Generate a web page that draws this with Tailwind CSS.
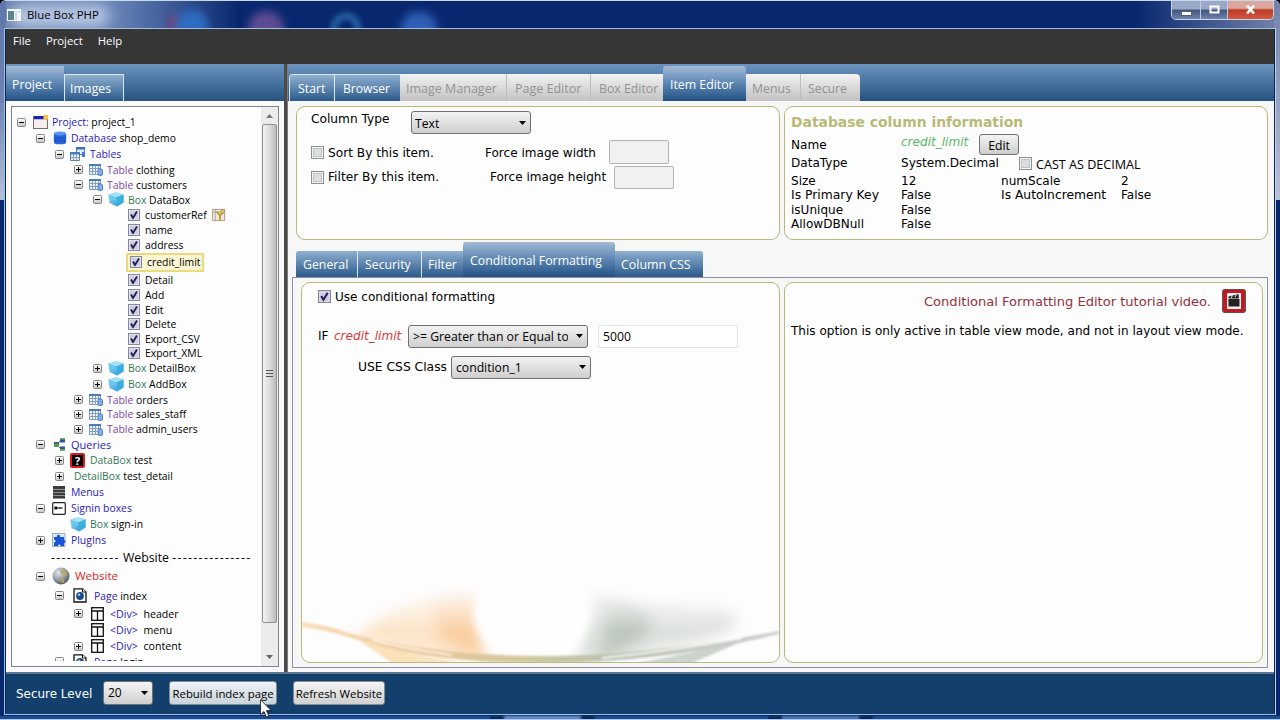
<!DOCTYPE html>
<html lang="en">
<head>
    <meta charset="UTF-8">
    <meta name="viewport" content="width=device-width, initial-scale=1.0">
    <title>Blue Box PHP</title>
    <script src="https://cdn.jsdelivr.net/npm/@tailwindcss/browser@4"></script>
</head>
<body class="w-[1280px] h-[720px] overflow-hidden bg-[#03060f] text-black">

    <!-- Icon sprites -->
    <svg class="absolute w-0 h-0">
        <defs>
            <linearGradient id="g-cube" x1="0" y1="0" x2="1" y2="1"><stop offset="0" stop-color="#9be0f8"/><stop offset="1" stop-color="#1f8fd0"/></linearGradient>
            <linearGradient id="g-btn" x1="0" y1="0" x2="0" y2="1"><stop offset="0" stop-color="#fff"/><stop offset="1" stop-color="#c4c4c4"/></linearGradient>
            <radialGradient id="g-globe" cx=".35" cy=".3" r=".8"><stop offset="0" stop-color="#e2e6ee"/><stop offset=".5" stop-color="#98a0ae"/><stop offset="1" stop-color="#454a55"/></radialGradient>
        </defs>
        <symbol id="i-minus" viewBox="0 0 9 9"><rect x=".5" y=".5" width="8" height="8" rx="1" fill="url(#g-btn)" stroke="#858585"/><path d="M2 4.500h5" stroke="#000"/></symbol>
        <symbol id="i-plus" viewBox="0 0 9 9"><rect x=".5" y=".5" width="8" height="8" rx="1" fill="url(#g-btn)" stroke="#858585"/><path d="M2 4.500h5M4.500 2v5" stroke="#000"/></symbol>
        <symbol id="i-project" viewBox="0 0 16 16"><rect x=".5" y="2.500" width="14" height="12" fill="#f4eeee" stroke="#7d6c6c"/><path d="M1 2h10v3H1z" fill="#1a1fc4"/><path d="M10.500 1h4.500v4.500h-4.500z" fill="#ffc62a"/><path d="M1 5.500h13" stroke="#c9bcbc"/></symbol>
        <symbol id="i-db" viewBox="0 0 16 16"><path d="M1 2.500v10.500c0 3 14 3 14 0V2.500z" fill="#2a62dc"/><ellipse cx="8" cy="2.800" rx="7" ry="2.200" fill="#5d97f5"/><path d="M1 6.500c1 2.200 13 2.200 14 0M1 10c1 2.200 13 2.200 14 0" fill="none" stroke="#164bb5"/></symbol>
        <symbol id="i-tables" viewBox="0 0 16 16"><path d="M6.500 1.500h8v7h-8z" fill="#e3edf7" stroke="#5a7da8"/><path d="M6 1h9v2.500H6z" fill="#3e6fb0"/><path d="M.5 6.500h9v8h-9z" fill="#e8f0f8" stroke="#5a7da8"/><path d="M0 6h10v2.500H0z" fill="#4a7cba"/><path d="M3.500 8v6.500M6.500 8v6.500M1 11.500h8" stroke="#8aa5c4"/><path d="M12 6h3v5h-3z" fill="#3f7bd0"/></symbol>
        <symbol id="i-table" viewBox="0 0 14 13"><path d="M.5 1.500h11v10H.5z" fill="#eef3f9" stroke="#7d9cc2"/><path d="M0 1h12v2H0z" fill="#4c7cb6"/><path d="M3.500 3v8M6.500 3v8M9.500 3v8M1 5.500h11M1 8.500h11" stroke="#7d97b8" stroke-width=".9"/><rect x="9" y="6" width="4.500" height="6.500" rx="1.500" fill="#7fb0ea" stroke="#3b6db3" stroke-width=".8"/></symbol>
        <symbol id="i-cube" viewBox="0 0 16 15"><path d="M.5 2.500L8 .3 15.500 2.500v8L9 14.500 1.500 11z" fill="url(#g-cube)"/><path d="M.5 2.500L8 .3 15.500 2.500 8 5.500z" fill="#a3e2f8"/><path d="M8 5.500L15.500 2.500v8L9 14.500z" fill="#3aaee0" opacity=".8"/><path d="M.5 2.500l7.500 3 .5 3.500-7.500-2z" fill="#6cc8ee"/></symbol>
        <symbol id="i-check" viewBox="0 0 12 12"><rect x=".5" y=".5" width="11" height="11" fill="#e4e2ee" stroke="#86869a"/><rect x="2" y="2" width="8" height="8" fill="#cfcde0"/><path d="M3 5.500l2 3.500L9 2.500" fill="none" stroke="#24205c" stroke-width="1.900"/></symbol>
        <symbol id="i-box" viewBox="0 0 13 13"><rect x=".5" y=".5" width="12" height="12" fill="#f4f4f4" stroke="#8e8f8f"/><rect x="2.500" y="2.500" width="8" height="8" fill="#dcdee0" stroke="#bfc3c8"/></symbol>
        <symbol id="i-key" viewBox="0 0 15 15"><path d="M.5 1.500h13v12H.5z" fill="#eee9da" stroke="#a29c8c"/><path d="M.5 4.500h13M3.500 1v13" stroke="#a7a294"/><path d="M8.500 13.500V8L5 3.500M8.500 8l4-4" fill="none" stroke="#c3a03c" stroke-width="2.200"/><circle cx="11.500" cy="3.500" r="2" fill="#e7ca63" stroke="#9d8132" stroke-width=".7"/></symbol>
        <symbol id="i-queries" viewBox="0 0 13 15"><path d="M4 7l4-4M4 8l4 4" stroke="#777"/><path d="M1 5h5v5H1z" fill="#4f9a3e"/><path d="M7 1h5v4.500H7zM7 9.500h5V14H7z" fill="#2f55a0"/><path d="M7 1h5v1.500H7zM7 12h5v2H7z" fill="#6fae58"/><path d="M1 5h5v1.500H1z" fill="#35589c"/></symbol>
        <symbol id="i-menus" viewBox="0 0 12 13"><path d="M0 0h12v13H0z" fill="#3b3b3b"/><path d="M0 3.500h12M0 6.500h12M0 9.500h12M0 12.500h12" stroke="#909090"/></symbol>
        <symbol id="i-signin" viewBox="0 0 14 13"><rect x=".7" y=".7" width="12.600" height="11.600" rx="1" fill="#fff" stroke="#222" stroke-width="1.200"/><path d="M2.500 6h8" stroke="#111" stroke-width="1.300"/><path d="M2.500 4.500h2.500v3H2.500z" fill="#111"/></symbol>
        <symbol id="i-plug" viewBox="0 0 14 14"><path d="M.5.5h12.500v13H.5z" fill="#dfe8f6" stroke="#9aa8bd"/><path d="M2 4h3c-1-3 4-3 3 0h4v3c2 0 2 3 0 3v3H8.500c.5-2-3-2-2.500 0H2V9.500c2 0 2-3 0-3z" fill="#1653d6"/></symbol>
        <symbol id="i-globe" viewBox="0 0 18 18"><circle cx="9" cy="9" r="8.500" fill="url(#g-globe)"/><path d="M8 3c3-1 6 0 7 3s-1 4-3 3-4-3-4-6zM8 10c3 0 5 2 4 6-3 0-4-3-4-6z" fill="#b9a95e" opacity=".8"/></symbol>
        <symbol id="i-page" viewBox="0 0 14 15"><path d="M1 .8h8.500L13 4v10H1z" fill="#fff" stroke="#111" stroke-width="1.300"/><path d="M9.500.8V4H13" fill="#fff" stroke="#111"/><circle cx="7" cy="8" r="3.900" fill="#1d4b86"/><circle cx="6" cy="6.800" r="1.300" fill="#9cc7ee"/></symbol>
        <symbol id="i-div" viewBox="0 0 13 14"><rect x=".7" y=".7" width="11.600" height="12.600" fill="#fff" stroke="#111" stroke-width="1.300"/><path d="M1 4h11M6.500 4v9.500" stroke="#111" stroke-width="1.300"/></symbol>
    </svg>

    <div class="relative w-[1280px] h-[720px] overflow-hidden flex flex-col rounded-t-md border-t border-[#c8d8ee] bg-[#08276f] font-['Open_Sans','Noto_Sans',sans-serif]">

        <!-- Glass reflections of the desktop behind the frame -->
        <div class="absolute inset-0 overflow-hidden">
            <div class="absolute left-0 top-0 w-[240px] h-7 bg-linear-to-r from-[#6b7fae] via-[#6480b4] to-transparent"></div>
            <div class="absolute left-[10px] top-[3px] w-[100px] h-[24px] rounded-full bg-[#b4c6e2] blur-[7px]"></div>
            <div class="absolute left-0 top-0 w-1.5 h-[199px] bg-linear-to-b from-[#5e76a8] via-[#6e84b4] to-[#b4c0da]"></div>
            <div class="absolute right-0 top-0 w-[145px] h-7 bg-linear-to-r from-transparent to-[#7583ac]"></div>
            <div class="absolute right-0 top-0 w-1.5 h-[199px] bg-linear-to-b from-[#7482aa] to-[#b9c2d8]"></div>
            <div class="absolute left-[166px] top-[14px] w-4 h-4 rounded-full bg-[#6a4a80] blur-[3px]"></div>
            <div class="absolute left-[176px] top-[9px] w-8 h-8 rounded-full bg-[#2e6cc2] blur-[4px]"></div>
            <div class="absolute left-[248px] top-[10px] w-9 h-9 rounded-full bg-[#5d4c94] blur-[4px]"></div>
            <div class="absolute left-[332px] top-[13px] w-7 h-7 rounded-full border-4 border-[#3b86c2] blur-[3px]"></div>
            <div class="absolute left-[401px] top-[11px] w-9 h-8 rounded-full bg-[#2f5fb5] blur-[4px]"></div>
            <div class="absolute left-0 bottom-0 w-full h-1 bg-[#1c4a93]"></div>
            <div class="absolute left-[490px] bottom-0 w-[105px] h-1 bg-[#6a8cbf] border-x-[14px] border-[#0b2550] blur-[1px]"></div>
            <div class="absolute left-[768px] bottom-0 w-[105px] h-1 bg-[#4d74b0] border-x-[14px] border-[#0b2550] blur-[1px]"></div>
            <div class="absolute left-0 bottom-0 w-full h-px bg-[#a9cdf0]"></div>
        </div>

        <!-- Title bar -->
        <header class="relative h-[27px] shrink-0 flex items-start justify-between pl-[7px] pr-[6px]">
            <div class="flex items-center h-7">
                <svg class="w-[14px] h-[12px] mr-[6px]" viewBox="0 0 14 12"><path d="M0 0h14v12H0z" fill="#f3f6fa"/><path d="M1 2h6v9H1z" fill="#5a8590"/><path d="M8 2h2v9H8zM11 2h2v2h-2z" fill="#cddbe2"/></svg>
                <span class="text-[11.4px]">Blue Box PHP</span>
            </div>
            <div class="flex h-[19px] w-[103px] rounded-b-[5px] border border-t-0 border-[#c9d3e4] overflow-hidden">
                <div class="w-[29px] flex justify-center pt-[10px] border-r border-[#c0cbde] bg-linear-to-b from-[#9aa9c8] from-45% via-[#41557f] via-50% to-[#6f84ac]"><span class="w-[11px] h-[5px] bg-white border border-[#555e78]"></span></div>
                <div class="w-[27px] flex justify-center pt-[4px] border-r border-[#c0cbde] bg-linear-to-b from-[#9aa9c8] from-45% via-[#41557f] via-50% to-[#6f84ac]"><svg class="w-[11px] h-[9px]" viewBox="0 0 11 9"><path d="M1.500 1.500h8v6h-8z" fill="none" stroke="#fff" stroke-width="2"/></svg></div>
                <div class="flex-1 flex justify-center pt-[4px] bg-linear-to-b from-[#dba69b] from-40% via-[#bb3a28] via-50% to-[#d4583e]"><svg class="w-[11px] h-[9px]" viewBox="0 0 11 9"><path d="M2 .5l7 8M9 .5l-7 8" stroke="#fff" stroke-width="2.600"/></svg></div>
            </div>
        </header>

        <!-- Window client area -->
        <div class="relative mx-[4px] h-[687px] shrink-0 flex flex-col border border-[#9fc0e6] border-r-[#c4d4ea]">
            <div class="flex flex-col flex-1 border-x border-[#0b2348]">
                <nav class="h-[35px] shrink-0 flex items-start gap-[15px] pl-[7px] pt-[4px] bg-[#363636] text-white text-[11.3px] leading-4">
                    <span>File</span><span>Project</span><span>Help</span>
                </nav>

                <div class="flex h-[608px] shrink-0">
                    <!-- Project explorer -->
                    <aside class="w-[278px] shrink-0 flex flex-col bg-[#fafafa]">
                        <div class="h-[37px] shrink-0 flex items-end bg-linear-to-b from-[#6b95c0] to-[#265380] text-white text-[12.3px]">
                            <div class="w-[58px] h-[35px] pl-[6px] pt-[11px] leading-4 bg-linear-to-b from-[#a3bad5] via-[#5c86b3] to-[#215284]">Project</div>
                            <div class="w-[60px] h-[27px] pl-[5px] pt-[6px] leading-4 border border-b-0 border-[#dbe7f3] bg-linear-to-b from-[#8fb0d0] to-[#2a5a8c]">Images</div>
                        </div>
                        <div class="ml-[5px] mt-[5px] w-[268px] h-[561px] flex border border-[#80848c] bg-[#fdfdfd]">
                            <div id="tree" class="flex-1 h-[554px] pt-[7px] overflow-hidden text-[10.4px] whitespace-nowrap"></div>
                            <div class="w-[17px] h-full flex flex-col items-center bg-[#ececec]">
                                <div class="h-[17px] shrink-0 flex items-center"><svg class="w-[7px] h-1" viewBox="0 0 7 4"><path d="M0 4l3.500-4L7 4z" fill="#777"/></svg></div>
                                <div class="w-[15px] h-[499px] shrink-0 flex flex-col items-center justify-center border border-[#909090] rounded-[2px] bg-linear-to-r from-[#f3f3f3] via-[#dcdcdc] to-[#bdbdbd]">
                                    <div class="w-[7px] h-[7px] border-y border-[#555] flex items-center"><div class="w-full h-px bg-[#555]"></div></div>
                                </div>
                                <div class="flex-1 flex items-end pb-[7px]"><svg class="w-[7px] h-1" viewBox="0 0 7 4"><path d="M0 0l3.500 4L7 0z" fill="#666"/></svg></div>
                            </div>
                        </div>
                    </aside>

                    <div class="w-[4px] shrink-0 bg-[#4b4b4b] border-r border-[#7c7c7c]"></div>

                    <!-- Editor -->
                    <main class="flex-1 flex flex-col bg-[#f7f7f7]">
                        <div class="h-[37px] shrink-0 flex items-end pl-[1px] bg-linear-to-b from-[#6b95c0] to-[#265380] text-[12.3px] leading-4 whitespace-nowrap text-[#929292]">
                            <div class="w-[46px] h-[27px] pl-[8px] pt-[6px] border border-b-0 rounded-tl border-[#dbe7f3] bg-linear-to-b from-[#8fb0d0] to-[#2a5a8c] text-white">Start</div>
                            <div class="w-[65px] h-[27px] pl-[8px] pt-[6px] border-t border-[#dbe7f3] bg-linear-to-b from-[#8fb0d0] to-[#2a5a8c] text-white text-[12.1px]">Browser</div>
                            <div class="w-[107px] h-[27px] pl-[6px] pt-[7px] border-r border-[#bdbdbd] bg-linear-to-b from-[#f2f2f2] to-[#c2c2c2] text-[12.5px]">Image Manager</div>
                            <div class="w-[84px] h-[27px] pl-[8px] pt-[7px] border-r border-[#bdbdbd] bg-linear-to-b from-[#f2f2f2] to-[#c2c2c2] text-[12.5px]">Page Editor</div>
                            <div class="w-[72px] h-[27px] pl-[8px] pt-[7px] bg-linear-to-b from-[#f2f2f2] to-[#c2c2c2]">Box Editor</div>
                            <div class="w-[83px] h-[35px] pl-[7px] pt-[11px] rounded-t-[3px] bg-linear-to-b from-[#a3bad5] via-[#5c86b3] to-[#215284] text-white">Item Editor</div>
                            <div class="w-[55px] h-[27px] pl-[6px] pt-[7px] border-r border-[#bdbdbd] bg-linear-to-b from-[#f2f2f2] to-[#c2c2c2]">Menus</div>
                            <div class="w-[59px] h-[27px] pl-[7px] pt-[7px] rounded-tr bg-linear-to-b from-[#f2f2f2] to-[#c2c2c2]">Secure</div>
                        </div>

                        <!-- Column settings -->
                        <div class="flex gap-[4px] pl-[8px] pt-[5px] font-['DejaVu_Sans',sans-serif] text-[12.05px] leading-[15px] whitespace-nowrap">
                            <section class="w-[484px] h-[134px] rounded-[9px] border border-[#b9b97c] bg-[#fdfdfd] pl-[14px]">
                                <div class="flex h-[33px]">
                                    <span class="w-[100px] pt-[5px] text-[12.2px]">Column Type</span>
                                    <div class="w-[120px] h-[23px] mt-[4px] flex items-center justify-between pl-[3px] pr-[4px] rounded-[3px] border border-[#707070] bg-linear-to-b from-[#f2f2f2] to-[#cfcfcf] font-['Open_Sans',sans-serif] text-[12.2px]"><span class="pt-px">Text</span><svg class="w-[7px] h-1" viewBox="0 0 7 4"><path d="M0 0h7L3.500 4z"/></svg></div>
                                </div>
                                <div class="flex items-center h-[24px]">
                                    <svg class="w-[13px] h-[13px] mr-[4px]"><use href="#i-box"/></svg>
                                    <span class="w-[157px] pt-[2px] text-[12.2px]">Sort By this item.</span>
                                    <span class="w-[124px] pt-[2px]">Force image width</span>
                                    <div class="w-[60px] h-[24px] rounded-[2px] border border-[#b4b4b4] bg-[#f1f1f1]"></div>
                                </div>
                                <div class="flex items-center h-[27px]">
                                    <svg class="w-[13px] h-[13px] mr-[4px]"><use href="#i-box"/></svg>
                                    <span class="w-[162px] text-[12.2px]">Filter By this item.</span>
                                    <span class="w-[124px]">Force image height</span>
                                    <div class="w-[60px] h-[23px] rounded-[2px] border border-[#b4b4b4] bg-[#f1f1f1]"></div>
                                </div>
                            </section>
                            <section class="w-[484px] h-[134px] rounded-[9px] border border-[#b9b97c] bg-[#fdfdfd] pl-[6px] pt-[7px]">
                                <h2 class="h-[18px] text-[13.9px] leading-4 font-bold text-[#b9b978]">Database column information</h2>
                                <div class="flex h-[24px]">
                                    <span class="w-[110px] pt-[6px]">Name</span>
                                    <span class="w-[78px] pt-[3px] italic text-[#55b865]">credit_limit</span>
                                    <div class="w-[40px] h-[21px] mt-[2px] flex items-center justify-center pt-px rounded-[3px] border border-[#707070] bg-linear-to-b from-[#f4f4f4] to-[#cdcdcd] font-['Open_Sans',sans-serif] text-[12.2px]">Edit</div>
                                </div>
                                <div class="flex h-[18px]">
                                    <span class="w-[110px]">DataType</span>
                                    <span class="w-[118px]">System.Decimal</span>
                                    <svg class="w-[13px] h-[13px] mt-px mr-[4px]"><use href="#i-box"/></svg>
                                    <span class="pt-px font-['Open_Sans',sans-serif] text-[12.6px]">CAST AS DECIMAL</span>
                                </div>
                                <div class="grid grid-cols-[110px_100px_120px_auto] auto-rows-[14.4px] leading-[14px]">
                                    <span>Size</span><span>12</span><span>numScale</span><span>2</span>
                                    <span class="text-[12.35px]">Is Primary Key</span><span>False</span><span class="text-[12.3px]">Is AutoIncrement</span><span>False</span>
                                    <span>isUnique</span><span>False</span><span></span><span></span>
                                    <span>AllowDBNull</span><span>False</span><span></span><span></span>
                                </div>
                            </section>
                        </div>

                        <!-- Item tabs -->
                        <div class="flex items-end h-[37px] shrink-0 pl-[8px] text-white text-[12.3px] leading-4 whitespace-nowrap">
                            <div class="w-[62px] h-[26px] pl-[7px] pt-[6px] rounded-tl-[3px] border-r border-[#dbe7f3] bg-linear-to-b from-[#8fb0d0] to-[#2a5a8c]">General</div>
                            <div class="w-[64px] h-[26px] pl-[7px] pt-[6px] border-r border-[#dbe7f3] bg-linear-to-b from-[#8fb0d0] to-[#2a5a8c]">Security</div>
                            <div class="w-[41px] h-[26px] pl-[6px] pt-[6px] bg-linear-to-b from-[#8fb0d0] to-[#2a5a8c]">Filter</div>
                            <div class="w-[152px] h-[35px] pl-[7px] pt-[11px] rounded-t-[3px] bg-linear-to-b from-[#a3bad5] via-[#5c86b3] to-[#215284]">Conditional Formatting</div>
                            <div class="w-[88px] h-[26px] pl-[6px] pt-[6px] rounded-tr-[3px] bg-linear-to-b from-[#8fb0d0] to-[#2a5a8c] text-[12.4px]">Column CSS</div>
                        </div>
                        <div class="ml-[4px] w-[976px] h-[391px] flex gap-[4px] pl-[8px] pt-[4px] border border-[#8e8ea4] font-['DejaVu_Sans',sans-serif] text-[12.05px] leading-[15px] whitespace-nowrap">
                            <section class="relative w-[479px] h-[381px] rounded-[9px] border border-[#b9b97c] bg-[#fdfdfd] overflow-hidden">
                                <svg class="absolute left-0 bottom-0 w-[477px] h-[90px]" viewBox="0 0 477 90">
                                    <defs>
                                        <filter id="soft" x="-30%" y="-30%" width="160%" height="160%"><feGaussianBlur stdDeviation="7"/></filter>
                                        <filter id="fine" x="-5%" y="-50%" width="110%" height="200%"><feGaussianBlur stdDeviation=".9"/></filter>
                                        <filter id="edge" x="-20%" y="-20%" width="140%" height="140%"><feGaussianBlur stdDeviation="4"/></filter>
                                        <linearGradient id="arc" x1="0" x2="1" y1="0" y2="0"><stop offset="0" stop-color="#fbdcb8"/><stop offset=".25" stop-color="#ecc99a"/><stop offset=".5" stop-color="#cdc79f"/><stop offset=".65" stop-color="#b9c2b0"/><stop offset="1" stop-color="#ccd2cc"/></linearGradient>
                                        <linearGradient id="fade" x1="0" x2="0" y1="0" y2="1"><stop offset="0" stop-color="#fdfdfd"/><stop offset=".15" stop-color="#fdfdfd"/><stop offset=".65" stop-color="#fdfdfd" stop-opacity="0"/></linearGradient>
                                        <clipPath id="above"><path d="M0 0H477V61Q340 87 240 87Q140 87 50 65L0 53z"/></clipPath>
                                    </defs>
                                    <g clip-path="url(#above)">
                                        <g filter="url(#soft)">
                                            <path d="M50 68Q80 42 100 34Q140 14 176 8L180 90Q110 80 50 68z" fill="#fcdfbd" opacity=".8"/>
                                            <path d="M130 36Q145 12 172 8L185 90L140 70z" fill="#fac896" opacity=".7"/>
                                            <path d="M275 92L290 8Q320 30 420 34Q450 46 420 62Q370 78 275 92z" fill="#d4d9d4" opacity=".75"/>
                                            <path d="M290 90Q310 65 300 24Q335 28 350 45Q350 74 290 90z" fill="#b3bdb2" opacity=".7"/>
                                        </g>
                                        <path d="M0 0H477V90H0z" fill="url(#fade)"/>
                                        <ellipse cx="230" cy="42" rx="58" ry="48" fill="#fefefe" filter="url(#edge)"/>
                                    </g>
                                    <g filter="url(#fine)">
                                        <path d="M0 50Q25 53 50 62Q140 84 240 84Q340 84 477 59V62Q360 91 240 91Q120 91 50 66Q20 57 0 55z" fill="url(#arc)"/>
                                        <path d="M52 65L90 91H165Q95 82 52 65z" fill="#fae0b4" opacity=".9"/>
                                        <path d="M455 63Q390 82 335 91H390Q430 74 455 63z" fill="#c5cec6" opacity=".9"/>
                                        <path d="M70 68Q110 78 150 83" stroke="#fffaf0" stroke-width="1.500" fill="none"/>
                                        <path d="M300 86Q370 79 440 66" stroke="#fff" stroke-width="1.500" fill="none"/>
                                    </g>
                                </svg>
                                <div class="relative pl-[16px]">
                                    <div class="flex items-center h-[27px]">
                                        <svg class="w-[13px] h-[13px] mr-[4px]" viewBox="0 0 12 12"><use href="#i-check" width="12" height="12"/></svg>
                                        <span class="pt-[2px]">Use conditional formatting</span>
                                    </div>
                                    <div class="flex items-center h-[52px]">
                                        <span class="w-[16px]">IF</span>
                                        <span class="w-[74px] italic text-[#d83a3a]">credit_limit</span>
                                        <div class="w-[180px] h-[23px] flex items-center justify-between pl-[4px] pr-[4px] rounded-[3px] border border-[#707070] bg-linear-to-b from-[#f2f2f2] to-[#cfcfcf] font-['Open_Sans',sans-serif] text-[12.25px]"><span class="w-[155px] pt-px overflow-hidden">&gt;= Greater than or Equal to</span><svg class="w-[7px] h-1" viewBox="0 0 7 4"><path d="M0 0h7L3.500 4z"/></svg></div>
                                        <div class="w-[140px] h-[23px] ml-[10px] flex items-center pl-[4px] border border-[#e2e3ea] bg-white font-['Open_Sans',sans-serif] text-[12.2px]">5000</div>
                                    </div>
                                    <div class="flex items-center h-[10px] pl-[40px]">
                                        <span class="w-[93px] text-[12.3px]">USE CSS Class</span>
                                        <div class="w-[140px] h-[23px] shrink-0 flex items-center justify-between pl-[4px] pr-[4px] rounded-[3px] border border-[#707070] bg-linear-to-b from-[#f2f2f2] to-[#cfcfcf] font-['Open_Sans',sans-serif] text-[12.2px]"><span class="pt-px">condition_1</span><svg class="w-[7px] h-1" viewBox="0 0 7 4"><path d="M0 0h7L3.500 4z"/></svg></div>
                                    </div>
                                </div>
                            </section>
                            <section class="w-[479px] h-[381px] rounded-[9px] border border-[#b9b97c] bg-[#fdfdfd] pl-[6px] pt-[6px]">
                                <div class="flex items-center justify-end h-[24px] pr-[16px] text-[13.05px] text-[#963040]">
                                    <span class="mr-[11px]">Conditional Formatting Editor tutorial video.</span>
                                    <svg class="w-6 h-6" viewBox="0 0 24 24"><rect x=".7" y=".7" width="22.600" height="22.600" rx="2" fill="#c81622" stroke="#6b4a4a" stroke-width="1.300"/><path d="M5 4h14v16H5z" fill="#f3f3f3"/><path d="M6.500 10h11v7.500h-11z" fill="#222"/><path d="M6.500 9.500v-2l10-2.500.5 4.500z" fill="#222"/><path d="M9 9l1.500-2.500M13 8l1.500-2.500" stroke="#f3f3f3"/></svg>
                                </div>
                                <p class="mt-[11px] text-[12.07px]">This option is only active in table view mode, and not in layout view mode.</p>
                            </section>
                        </div>
                    </main>
                </div>

                <!-- Status bar -->
                <footer class="flex-1 flex items-start pl-[10px] pt-[7px] border-t-2 border-[#5d7690] bg-[#123f6c] text-[11.4px]">
                    <span class="w-[87px] pt-[5px] leading-4 font-['DejaVu_Sans',sans-serif] text-[11.95px] text-white">Secure Level</span>
                    <div class="w-[50px] h-[24px] flex items-center justify-between pl-[4px] pr-[4px] rounded-[3px] border border-[#707070] bg-linear-to-b from-[#f4f4f4] to-[#cfcfcf] text-[12px]"><span>20</span><svg class="w-[7px] h-1" viewBox="0 0 7 4"><path d="M0 0h7L3.500 4z"/></svg></div>
                    <div class="w-[108px] h-[24px] ml-[16px] flex items-center justify-center pt-[2px] rounded-[3px] border border-[#7d8b96] bg-linear-to-b from-[#eef3f6] to-[#c9d3da] whitespace-nowrap">Rebuild index page</div>
                    <div class="w-[92px] h-[24px] ml-[16px] flex items-center justify-center pt-[2px] rounded-[3px] border border-[#8a8a8a] bg-linear-to-b from-[#f4f4f4] to-[#d0d0d0] whitespace-nowrap">Refresh Website</div>
                </footer>
            </div>
        </div>

        <!-- Mouse pointer -->
        <svg class="absolute left-[260px] top-[698px] w-[12px] h-[19px]" viewBox="0 0 12 19"><path d="M.5.8v15l3.500-3.300 2.300 5.500 2.500-1-2.300-5.400h4.800z" fill="#fff" stroke="#111" stroke-width=".8"/></svg>
    </div>

    <script>
        // height, expander x, expander, icon, icon size, icon x, text x, label, label colour, name, variant
        const BLUE = 'text-[#2a22b8]', PURPLE = 'text-[#7d45a5]', GREEN = 'text-[#35785a]', RED = 'text-[#d21f2d]';
        const rows = [
            [16, 5, 'minus', 'project', 'w-4 h-4', 21, 40, 'Project:', BLUE, 'project_1'],
            [16, 24, 'minus', 'db', 'w-[14px] h-[14px]', 41, 59, 'Database', BLUE, 'shop_demo'],
            [16, 43, 'minus', 'tables', 'w-4 h-4', 58, 78, 'Tables', BLUE, ''],
            [15, 62, 'plus', 'table', 'w-[14px] h-[13px]', 77, 95, 'Table', PURPLE, 'clothing'],
            [15, 62, 'minus', 'table', 'w-[14px] h-[13px]', 77, 95, 'Table', PURPLE, 'customers'],
            [15, 81, 'minus', 'cube', 'w-4 h-[15px]', 96, 116, 'Box', GREEN, 'DataBox'],
            [15, 0, '', 'check', 'w-3 h-3', 116, 133, '', '', 'customerRef', 'key'],
            [15, 0, '', 'check', 'w-3 h-3', 116, 133, '', '', 'name'],
            [15, 0, '', 'check', 'w-3 h-3', 116, 133, '', '', 'address'],
            [20, 0, '', 'check', 'w-3 h-3', 118, 135, '', '', 'credit_limit', 'selected'],
            [15, 0, '', 'check', 'w-3 h-3', 116, 133, '', '', 'Detail'],
            [15, 0, '', 'check', 'w-3 h-3', 116, 133, '', '', 'Add'],
            [15, 0, '', 'check', 'w-3 h-3', 116, 133, '', '', 'Edit'],
            [14, 0, '', 'check', 'w-3 h-3', 116, 133, '', '', 'Delete'],
            [15, 0, '', 'check', 'w-3 h-3', 116, 133, '', '', 'Export_CSV'],
            [14, 0, '', 'check', 'w-3 h-3', 116, 133, '', '', 'Export_XML'],
            [16, 81, 'plus', 'cube', 'w-4 h-[15px]', 96, 116, 'Box', GREEN, 'DetailBox'],
            [16, 81, 'plus', 'cube', 'w-4 h-[15px]', 96, 116, 'Box', GREEN, 'AddBox'],
            [15, 62, 'plus', 'table', 'w-[14px] h-[13px]', 77, 95, 'Table', PURPLE, 'orders'],
            [14, 62, 'plus', 'table', 'w-[14px] h-[13px]', 77, 95, 'Table', PURPLE, 'sales_staff'],
            [16, 62, 'plus', 'table', 'w-[14px] h-[13px]', 77, 95, 'Table', PURPLE, 'admin_users'],
            [15, 24, 'minus', 'queries', 'w-[13px] h-[15px]', 41, 59, 'Queries', BLUE, '', 'wide'],
            [16, 43, 'plus', 'question', '', 58, 78, 'DataBox', GREEN, 'test'],
            [16, 43, 'plus', '', '', 0, 62, 'DetailBox', GREEN, 'test_detail'],
            [16, 0, '', 'menus', 'w-3 h-[13px]', 41, 59, 'Menus', BLUE, ''],
            [16, 24, 'minus', 'signin', 'w-[14px] h-[13px]', 40, 59, 'Signin boxes', BLUE, ''],
            [16, 0, '', 'cube', 'w-4 h-[15px]', 58, 78, 'Box', GREEN, 'sign-in'],
            [16, 24, 'plus', 'plug', 'w-[14px] h-[14px]', 40, 59, 'PlugIns', BLUE, ''],
            [18, 0, '', '', '', 0, 39, '', '', '', 'divider'],
            [20, 24, 'minus', 'globe', 'w-[18px] h-[18px]', 40, 63, 'Website', RED, '', 'large'],
            [19, 43, 'minus', 'page', 'w-[14px] h-[15px]', 61, 82, 'Page', BLUE, 'index'],
            [17, 62, 'plus', 'div', 'w-[13px] h-[14px]', 79, 98, '<Div>', BLUE, 'header', 'div'],
            [16, 0, '', 'div', 'w-[13px] h-[14px]', 79, 98, '<Div>', BLUE, 'menu', 'div'],
            [16, 62, 'plus', 'div', 'w-[13px] h-[14px]', 79, 98, '<Div>', BLUE, 'content', 'div'],
            [15, 43, 'minus', 'page', 'w-[14px] h-[15px]', 61, 82, 'Page', BLUE, 'login']
        ];
        const iconWidth = { project: 16, tables: 16, cube: 16, check: 12, menus: 12, queries: 13, div: 13, globe: 18 };

        const tree = document.getElementById('tree');
        rows.forEach(([h, ex, expander, icon, size, ix, tx, label, color, name, extra]) => {
            const row = document.createElement('div');
            row.className = 'flex items-center';
            row.style.height = h + 'px';
            let x = 0, html = '';
            if (expander) {
                html += `<svg class="w-[9px] h-[9px] shrink-0" style="margin-left:${ex}px"><use href="#i-${expander}"/></svg>`;
                x = ex + 9;
            }
            if (icon === 'question') {
                html += `<span class="w-[15px] h-[15px] shrink-0 flex items-center justify-center rounded-[2px] border-2 border-[#d81c24] bg-black text-white text-[11px] leading-none font-bold" style="margin-left:${ix - x}px">?</span>`;
                x = ix + 15;
            } else if (icon) {
                html += `<svg class="${size} shrink-0" style="margin-left:${ix - x}px"><use href="#i-${icon}"/></svg>`;
                x = ix + (iconWidth[icon] || 14);
            }
            const pad = `style="padding-left:${tx - x}px"`;
            const tag = `<span class="${color}">${label.replace('<', '&lt;').replace('>', '&gt;')}</span>`;
            if (extra === 'divider') {
                html += `<span class="pt-[2px] text-[12.3px] whitespace-pre" ${pad}><span class="tracking-[1.33px]">-------------</span> Website <span class="tracking-[1.33px]">---------------</span></span>`;
            } else if (extra === 'large') {
                html += `<span class="text-[11.5px]" ${pad}>${tag}</span>`;
            } else if (extra === 'wide') {
                html += `<span class="pt-[2px] text-[11px]" ${pad}>${tag}</span>`;
            } else if (extra === 'div') {
                html += `<span class="pt-[2px] text-[10.6px]" ${pad}><span class="mr-[3px]">${tag}</span> ${name}</span>`;
            } else {
                html += `<span class="pt-[2px]" ${pad}>${label ? tag + ' ' : ''}${name}</span>`;
            }
            if (extra === 'key') html += '<svg class="w-[14px] h-[14px] ml-[5px]"><use href="#i-key"/></svg>';
            if (extra === 'selected') {
                row.innerHTML = `<div class="ml-[114px] h-[19px] flex items-center pl-[2px] pr-px border-2 border-[#ecd97c] bg-[#fdf6d5]"><svg class="w-3 h-3"><use href="#i-check"/></svg><span class="pt-[2px] pl-[5px]">${name}</span></div>`;
            } else {
                row.innerHTML = html;
            }
            tree.appendChild(row);
        });
    </script>
</body>
</html>
